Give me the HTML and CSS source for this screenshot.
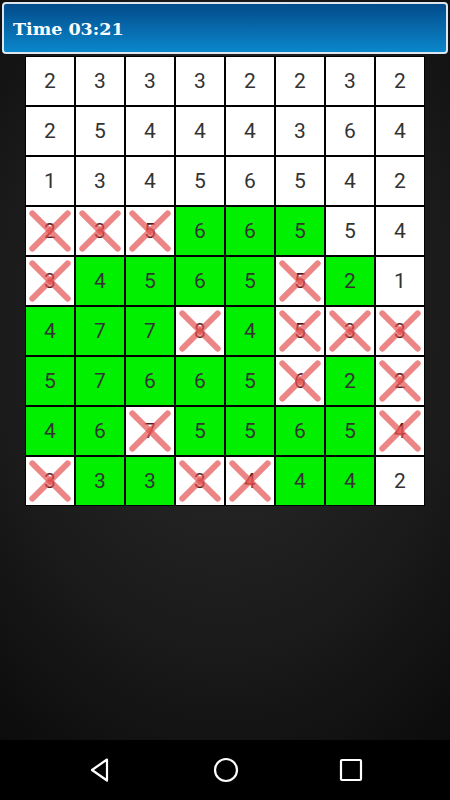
FILE: index.html
```html
<!DOCTYPE html>
<html lang="en">
<head>
  <meta charset="UTF-8">
  <title>Number Grid</title>
  <link rel="stylesheet" href="styles.css">
</head>
<body>

<div id="screen">
  <div id="topbar">Time 03:21</div>

  <div id="board">
    <!-- row 1 -->
    <div class="cell">2</div><div class="cell">3</div><div class="cell">3</div><div class="cell">3</div>
    <div class="cell">2</div><div class="cell">2</div><div class="cell">3</div><div class="cell">2</div>
    <!-- row 2 -->
    <div class="cell">2</div><div class="cell">5</div><div class="cell">4</div><div class="cell">4</div>
    <div class="cell">4</div><div class="cell">3</div><div class="cell">6</div><div class="cell">4</div>
    <!-- row 3 -->
    <div class="cell">1</div><div class="cell">3</div><div class="cell">4</div><div class="cell">5</div>
    <div class="cell">6</div><div class="cell">5</div><div class="cell">4</div><div class="cell">2</div>
    <!-- row 4 -->
    <div class="cell crossed">2</div><div class="cell crossed">3</div><div class="cell crossed">5</div><div class="cell on">6</div>
    <div class="cell on">6</div><div class="cell on">5</div><div class="cell">5</div><div class="cell">4</div>
    <!-- row 5 -->
    <div class="cell crossed">3</div><div class="cell on">4</div><div class="cell on">5</div><div class="cell on">6</div>
    <div class="cell on">5</div><div class="cell crossed">5</div><div class="cell on">2</div><div class="cell">1</div>
    <!-- row 6 -->
    <div class="cell on">4</div><div class="cell on">7</div><div class="cell on">7</div><div class="cell crossed">8</div>
    <div class="cell on">4</div><div class="cell crossed">5</div><div class="cell crossed">3</div><div class="cell crossed">3</div>
    <!-- row 7 -->
    <div class="cell on">5</div><div class="cell on">7</div><div class="cell on">6</div><div class="cell on">6</div>
    <div class="cell on">5</div><div class="cell crossed">6</div><div class="cell on">2</div><div class="cell crossed">2</div>
    <!-- row 8 -->
    <div class="cell on">4</div><div class="cell on">6</div><div class="cell crossed">7</div><div class="cell on">5</div>
    <div class="cell on">5</div><div class="cell on">6</div><div class="cell on">5</div><div class="cell crossed">4</div>
    <!-- row 9 -->
    <div class="cell crossed">3</div><div class="cell on">3</div><div class="cell on">3</div><div class="cell crossed">3</div>
    <div class="cell crossed">4</div><div class="cell on">4</div><div class="cell on">4</div><div class="cell">2</div>
  </div>
</div>

<div id="navbar">
  <svg width="24" height="26" viewBox="0 0 24 26">
    <path d="M19 2.5 L4 13 L19 23.5 Z" fill="none" stroke="#fff" stroke-width="2.2" stroke-linejoin="round"/>
  </svg>
  <svg width="26" height="26" viewBox="0 0 26 26">
    <circle cx="13" cy="13" r="11" fill="none" stroke="#fff" stroke-width="2.2"/>
  </svg>
  <svg width="24" height="24" viewBox="0 0 24 24">
    <rect x="2" y="2" width="20" height="20" rx="1" fill="none" stroke="#fff" stroke-width="2.2"/>
  </svg>
</div>

</body>
</html>
```

FILE: styles.css
```css
html, body {
  margin: 0;
  padding: 0;
}

body {
  width: 450px;
  height: 800px;
  display: flex;
  flex-direction: column;
  background: #000;
  font-family: Roboto, "Noto Sans", sans-serif;
}

#screen {
  flex: 1;
  display: flex;
  flex-direction: column;
  align-items: center;
  background: radial-gradient(ellipse 90% 75% at 50% 45%, #2b2b2b 0%, #1b1b1b 55%, #080808 100%);
}

#topbar {
  align-self: stretch;
  margin: 2px 2px 0;
  height: 46px;
  border: 2px solid #dbe6f0;
  border-radius: 4px;
  background: linear-gradient(to bottom, #034b8a, #0a87cb);
  color: #fff;
  font-family: "DejaVu Serif", serif;
  font-weight: bold;
  font-size: 17.5px;
  display: flex;
  align-items: center;
  padding-left: 9px;
  padding-top: 2px;
}

#board {
  margin-top: 2px;
  display: grid;
  grid-template-columns: repeat(8, 48px);
  grid-auto-rows: 48px;
  gap: 2px;
  padding: 1px;
  background: #000;
}

.cell {
  position: relative;
  background: #fff;
  color: #333;
  font-size: 21px;
  display: flex;
  align-items: center;
  justify-content: center;
}

.cell.on {
  background: #00f000;
}

.cell.crossed {
  color: #5a1a1a;
}

.cell.crossed::before,
.cell.crossed::after {
  content: "";
  position: absolute;
  left: 50%;
  top: 50%;
  width: 56px;
  height: 6px;
  margin: -3px 0 0 -28px;
  border-radius: 3px;
  background: rgba(228, 82, 82, 0.7);
  transform: rotate(45deg);
}

.cell.crossed::after {
  transform: rotate(-45deg);
}

#navbar {
  height: 60px;
  background: #000;
  display: flex;
  align-items: center;
  justify-content: space-between;
  padding: 0 87px 0 88px;
}
```
